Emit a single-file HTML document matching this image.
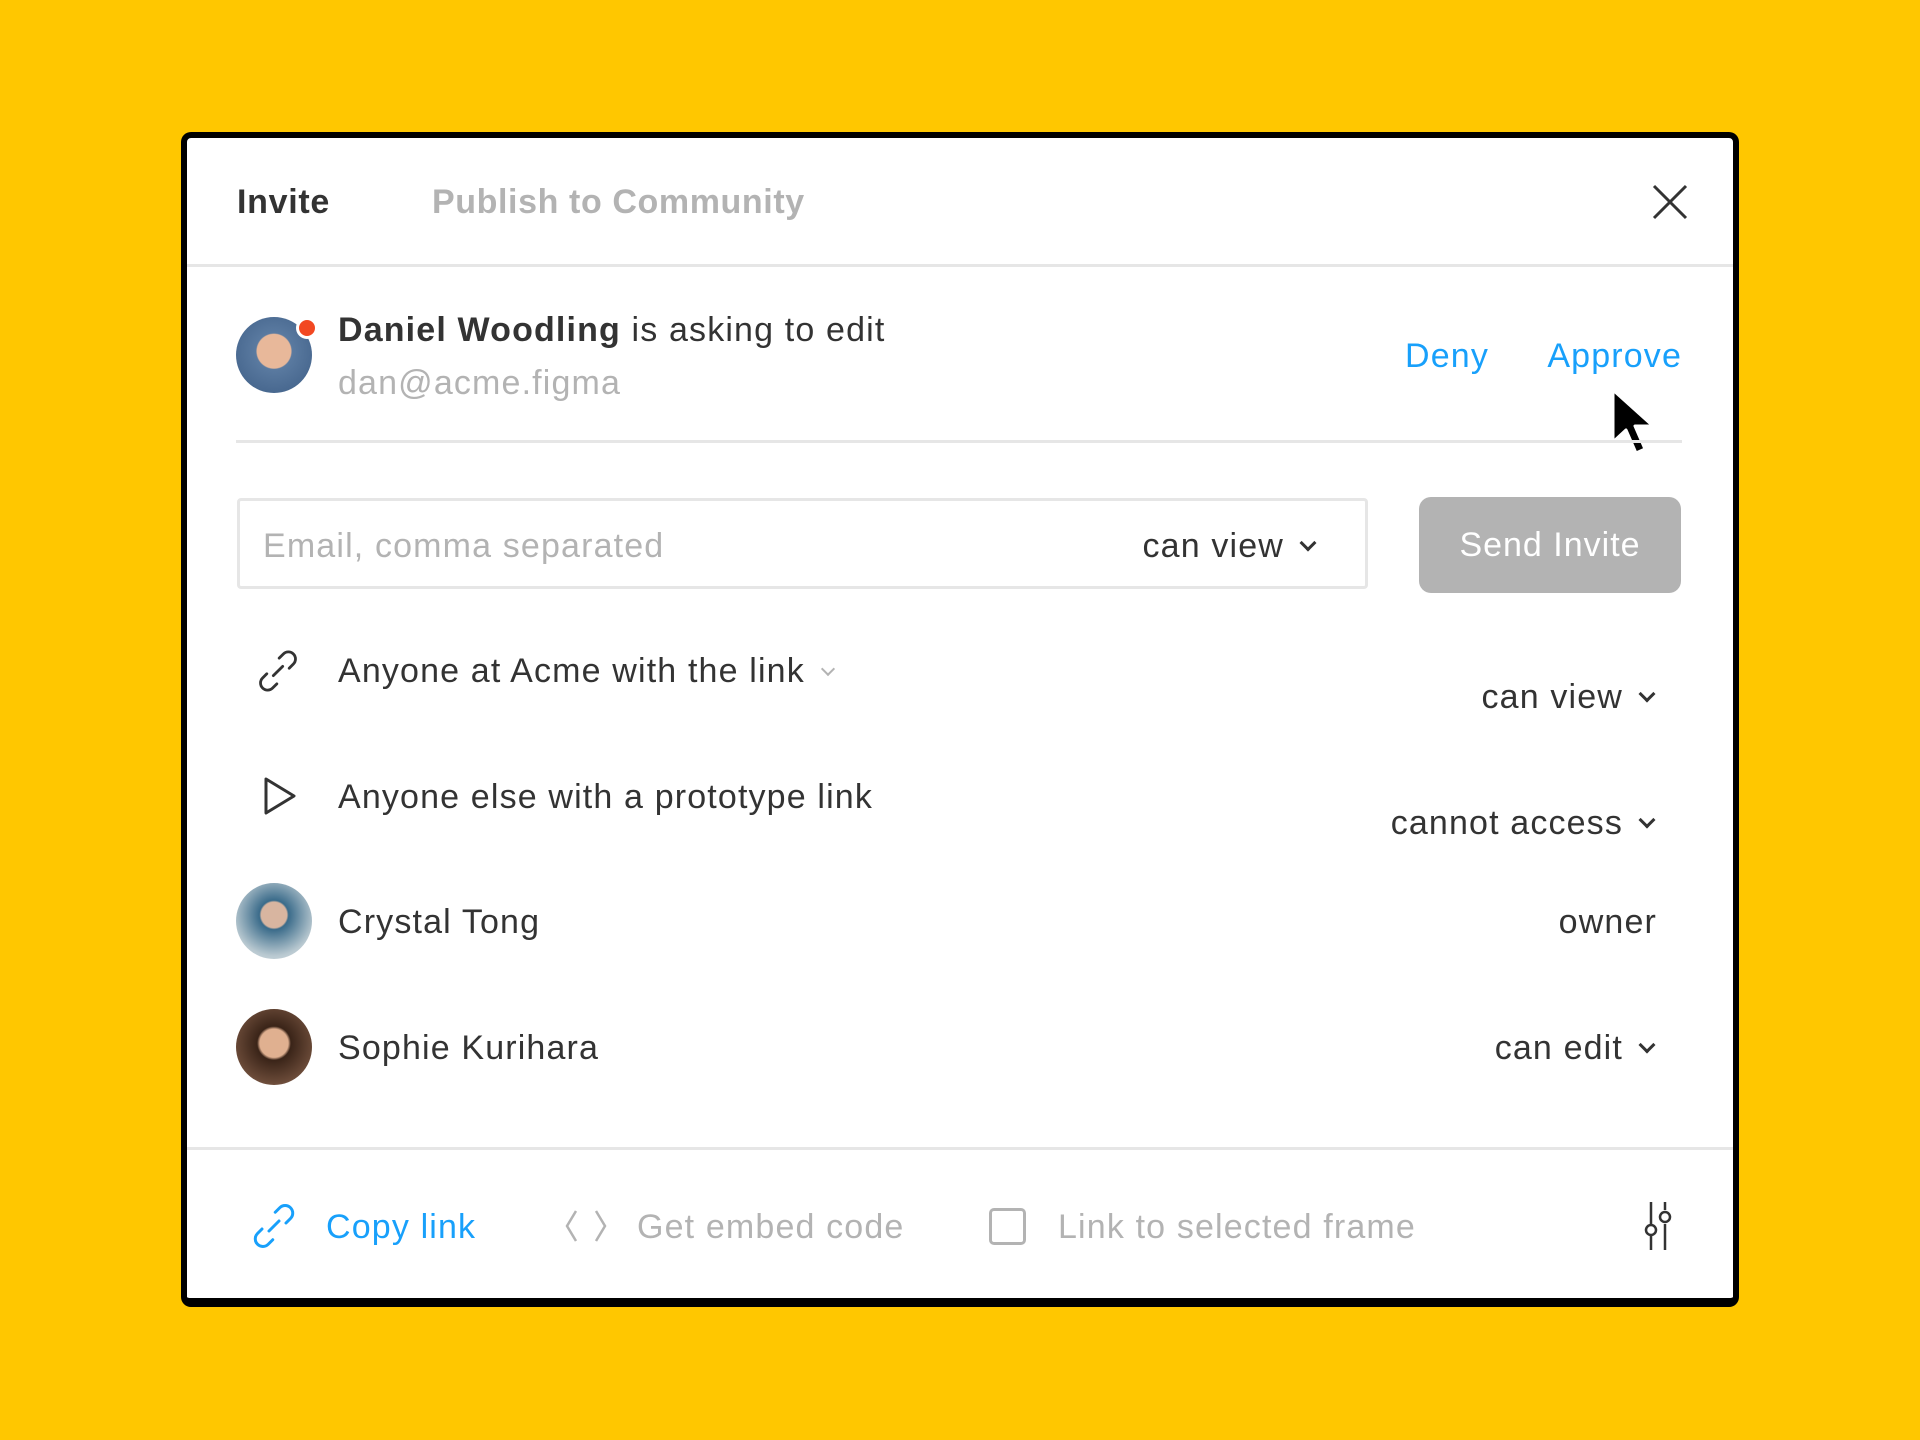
<!DOCTYPE html>
<html><head><meta charset="utf-8"><style>
*{margin:0;padding:0;box-sizing:border-box}
body{width:1920px;height:1440px;background:#ffc700;font-family:"Liberation Sans",sans-serif;position:relative;overflow:hidden;color:#333}
.dlg{position:absolute;left:181px;top:132px;width:1558px;height:1175px;background:#fff;border:6px solid #000;border-bottom-width:9px;border-radius:10px;}
.a{position:absolute;white-space:nowrap;line-height:1}
.t{font-size:34px;letter-spacing:1.15px}
.g{color:#b3b3b3}
.b{color:#18a0fb}
.hr{position:absolute;height:3px;background:#e6e6e6}
.av{position:absolute;width:76px;height:76px;border-radius:50%}
.chev{display:inline-block;width:12px;height:12px;border-right:3px solid #333;border-bottom:3px solid #333;transform:rotate(45deg);margin-left:18px;margin-right:4px;position:relative;top:-8px}
</style></head><body>
<div class="dlg"></div>
<div class="a" style="left:237px;top:185px;font-size:34px;font-weight:bold;color:#333;letter-spacing:0.7px">Invite</div>
<div class="a g" style="left:432px;top:185px;font-size:34px;font-weight:bold;letter-spacing:0.6px">Publish to Community</div>
<svg class="a" style="left:1651px;top:183px" width="38" height="38"><path d="M3 3L35 35M35 3L3 35" stroke="#333" stroke-width="3"/></svg>
<div class="hr" style="left:187px;width:1546px;top:264px"></div>

<div class="av" style="left:236px;top:317px;background:radial-gradient(circle at 50% 45%,#e8b89a 0 30%,#5a7aa0 32%,#3d5d85 100%)"></div>
<div class="a" style="left:296px;top:317px;width:22px;height:22px;border-radius:50%;background:#f24822;border:3px solid #fff"></div>
<div class="a t" style="left:338px;top:313px"><b>Daniel Woodling</b> is asking to edit</div>
<div class="a t g" style="left:338px;top:366px">dan@acme.figma</div>
<div class="a t b" style="right:431px;top:339px">Deny</div>
<div class="a t b" style="right:238px;top:339px">Approve</div>
<svg class="a" style="left:1608px;top:386px" width="54" height="74"><path d="M5 4L5 56L18 44L28 67L37 63L27 40L45 40Z" fill="#000" stroke="#fff" stroke-width="3" stroke-linejoin="round"/></svg>
<div class="hr" style="left:236px;width:1446px;top:440px"></div>

<div class="a" style="left:237px;top:498px;width:1131px;height:91px;border:3px solid #e6e6e6;border-radius:4px"></div>
<div class="a t g" style="left:263px;top:529px">Email, comma separated</div>
<div class="a t" style="right:602px;top:529px">can view<span class="chev"></span></div>
<div class="a" style="left:1419px;top:497px;width:262px;height:96px;background:#b3b3b3;border-radius:12px;color:#fff;font-size:34px;letter-spacing:1px;text-align:center;line-height:96px">Send Invite</div>

<svg class="a" style="left:250px;top:643px" width="56" height="56" viewBox="0 0 24 24"><g fill="none" stroke="#333" stroke-width="1.2" stroke-linecap="round"><path d="M10 14l4-4"/><path d="M12.5 6.5l1.8-1.8a3 3 0 014.3 4.3l-1.8 1.8"/><path d="M11.5 17.5l-1.8 1.8a3 3 0 01-4.3-4.3l1.8-1.8"/></g></svg>
<div class="a t" style="left:338px;top:654px">Anyone at Acme with the link<span class="chev" style="border-color:#b3b3b3;width:10px;height:10px;border-width:2px"></span></div>
<div class="a t" style="right:263px;top:680px">can view<span class="chev"></span></div>

<svg class="a" style="left:262px;top:776px" width="36" height="40"><path d="M4 3L32 20L4 37Z" fill="none" stroke="#333" stroke-width="3" stroke-linejoin="round"/></svg>
<div class="a t" style="left:338px;top:780px">Anyone else with a prototype link</div>
<div class="a t" style="right:263px;top:806px">cannot access<span class="chev"></span></div>

<div class="av" style="left:236px;top:883px;background:radial-gradient(circle at 50% 42%,#d8b5a0 0 22%,#3a6b8a 25%,#b8c8d0 70%,#e0e6ea 100%)"></div>
<div class="a t" style="left:338px;top:905px">Crystal Tong</div>
<div class="a t" style="right:263px;top:905px">owner</div>

<div class="av" style="left:236px;top:1009px;background:radial-gradient(circle at 50% 45%,#e0b090 0 25%,#3a2418 30%,#6a4a38 70%,#a08070 100%)"></div>
<div class="a t" style="left:338px;top:1031px">Sophie Kurihara</div>
<div class="a t" style="right:263px;top:1031px">can edit<span class="chev"></span></div>

<div class="hr" style="left:187px;width:1546px;top:1147px"></div>

<svg class="a" style="left:244px;top:1196px" width="60" height="60" viewBox="0 0 24 24"><g fill="none" stroke="#18a0fb" stroke-width="1.2" stroke-linecap="round"><path d="M10 14l4-4"/><path d="M12.5 6.5l1.8-1.8a3 3 0 014.3 4.3l-1.8 1.8"/><path d="M11.5 17.5l-1.8 1.8a3 3 0 01-4.3-4.3l1.8-1.8"/></g></svg>
<div class="a t b" style="left:326px;top:1210px">Copy link</div>
<svg class="a" style="left:563px;top:1208px" width="46" height="36"><path d="M13 3L4 18L13 33M33 3L42 18L33 33" fill="none" stroke="#b3b3b3" stroke-width="2.5"/></svg>
<div class="a t g" style="left:637px;top:1210px">Get embed code</div>
<div class="a" style="left:989px;top:1208px;width:37px;height:37px;border:3px solid #b3b3b3;border-radius:5px"></div>
<div class="a t g" style="left:1058px;top:1210px">Link to selected frame</div>
<svg class="a" style="left:1636px;top:1200px" width="44" height="52"><g fill="none" stroke="#333" stroke-width="2.5"><path d="M15 2V24M15 36V50M29 2V10M29 24V50"/><circle cx="15" cy="30" r="5"/><circle cx="29" cy="17" r="5"/></g></svg>
</body></html>
